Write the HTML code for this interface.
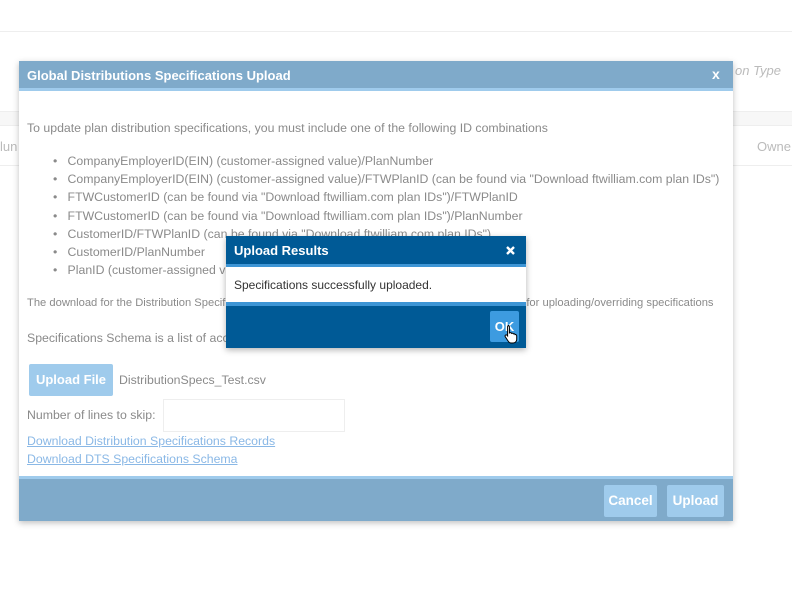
<!DOCTYPE html>
<html><head><meta charset="utf-8"><style>
*{margin:0;padding:0;box-sizing:border-box}
body{width:792px;height:606px;background:#fff;position:relative;overflow:hidden;font-family:"Liberation Sans",sans-serif;color:#8a8a8a}
.a{position:absolute;white-space:nowrap}
.t{font-size:12.3px}
</style></head><body>
<div class="a" style="left:0;top:31px;width:792px;height:1px;background:#eee"></div>
<div class="a" style="left:135px;top:66px;width:180px;height:22px;border:1px solid #f0f0f0"></div>
<div class="a" style="left:735px;top:63px;font-size:13px;font-style:italic;color:#bbb">on Type</div>
<div class="a" style="left:0;top:111px;width:792px;height:1px;background:#eee"></div>
<div class="a" style="left:0;top:112px;width:792px;height:13px;background:#f7f7f7"></div>
<div class="a" style="left:0;top:125px;width:792px;height:1px;background:#eee"></div>
<div class="a" style="left:0;top:165px;width:792px;height:1px;background:#eee"></div>
<div class="a" style="left:0;top:139px;font-size:13px;color:#bbb">lun</div>
<div class="a" style="left:757px;top:139px;font-size:13px;color:#bbb">Owne</div>

<div class="a" style="left:19px;top:61px;width:714px;height:460px;background:#fff;box-shadow:0 2px 6px rgba(0,0,0,.25)">
 <div class="a" style="left:0;top:0;width:714px;height:27px;background:#7faaca"></div>
 <div class="a" style="left:0;top:27px;width:714px;height:3px;background:#9fcbec"></div>
 <div class="a" style="left:8px;top:7px;color:#fff;font-weight:bold;font-size:13px">Global Distributions Specifications Upload</div>
 <div class="a" style="left:693px;top:5px;color:#fff;font-weight:bold;font-size:14px">x</div>
 <div class="a t" style="left:8px;top:60px">To update plan distribution specifications, you must include one of the following ID combinations</div>
 <div class="a t" style="left:34px;top:91px;line-height:18.2px">
 •&nbsp;&nbsp;&nbsp;CompanyEmployerID(EIN) (customer-assigned value)/PlanNumber<br>
 •&nbsp;&nbsp;&nbsp;CompanyEmployerID(EIN) (customer-assigned value)/FTWPlanID (can be found via "Download ftwilliam.com plan IDs")<br>
 •&nbsp;&nbsp;&nbsp;FTWCustomerID (can be found via "Download ftwilliam.com plan IDs")/FTWPlanID<br>
 •&nbsp;&nbsp;&nbsp;FTWCustomerID (can be found via "Download ftwilliam.com plan IDs")/PlanNumber<br>
 •&nbsp;&nbsp;&nbsp;CustomerID/FTWPlanID (can be found via "Download ftwilliam.com plan IDs")<br>
 •&nbsp;&nbsp;&nbsp;CustomerID/PlanNumber<br>
 •&nbsp;&nbsp;&nbsp;PlanID (customer-assigned value)</div>
 <div class="a" style="left:8px;top:236px;font-size:11.2px">The download for the Distribution Specifications Records is a list of all existing specifications - useful for uploading/overriding specifications</div>
 <div class="a t" style="left:8px;top:270px">Specifications Schema is a list of accepted column headers</div>
 <div class="a" style="left:10px;top:303px;width:84px;height:32px;background:#9fcbec;border-radius:2px;color:#fff;font-weight:bold;font-size:13px;line-height:32px;text-align:center">Upload File</div>
 <div class="a t" style="left:100px;top:312px">DistributionSpecs_Test.csv</div>
 <div class="a t" style="left:8px;top:347px">Number of lines to skip:</div>
 <div class="a" style="left:144px;top:338px;width:182px;height:33px;border:1px solid #eee"></div>
 <div class="a t" style="left:8px;top:373px;color:#8ab8e6;text-decoration:underline">Download Distribution Specifications Records</div>
 <div class="a t" style="left:8px;top:391px;color:#8ab8e6;text-decoration:underline">Download DTS Specifications Schema</div>
 <div class="a" style="left:0;top:415px;width:714px;height:3px;background:#9fcbec"></div>
 <div class="a" style="left:0;top:418px;width:714px;height:42px;background:#7faaca"></div>
 <div class="a" style="left:585px;top:424px;width:53px;height:32px;background:#9fcbec;border-radius:2px;color:#fff;font-weight:bold;font-size:13.5px;line-height:32px;text-align:center">Cancel</div>
 <div class="a" style="left:648px;top:424px;width:57px;height:32px;background:#9fcbec;border-radius:2px;color:#fff;font-weight:bold;font-size:13.5px;line-height:32px;text-align:center">Upload</div>
</div>

<div class="a" style="left:226px;top:236px;width:300px;height:112px;background:#005a96;box-shadow:0 2px 6px rgba(0,0,0,.3)">
 <div class="a" style="left:8px;top:7px;color:#fff;font-weight:bold;font-size:13px">Upload Results</div>
 <svg class="a" style="left:280px;top:10px" width="9" height="9" viewBox="0 0 9 9"><path d="M1 1L8 8M8 1L1 8" stroke="#fff" stroke-width="2.4"/></svg>
 <div class="a" style="left:0;top:28px;width:300px;height:3px;background:#3d95d5"></div>
 <div class="a" style="left:0;top:31px;width:300px;height:35px;background:#fff"></div>
 <div class="a" style="left:8px;top:42px;color:#333;font-size:12px">Specifications successfully uploaded.</div>
 <div class="a" style="left:0;top:66px;width:300px;height:4px;background:#3d95d5"></div>
 <div class="a" style="left:264px;top:75px;width:29px;height:31px;background:#3d9be0;border-radius:2px;color:#fff;font-weight:bold;font-size:13px;line-height:31px;text-align:center">OK</div>
 <svg class="a" style="left:278px;top:88px" width="16" height="20" viewBox="0 0 16 20"><path d="M4 1.5c.8 0 1.4.6 1.4 1.4V9l.5-.2c.8-.3 1.5.1 1.7.6.7-.4 1.5-.1 1.8.5.7-.3 1.5 0 1.7.7.9-.2 1.6.4 1.6 1.3v3.5c0 2-1.5 3.6-3.5 3.6H7c-1.2 0-2-.6-2.6-1.5L1.3 12.8c-.5-.7-.3-1.5.4-1.8.6-.3 1.2 0 1.6.5l.3.4V2.9c0-.8.6-1.4 1.4-1.4z" fill="#fff" stroke="#000" stroke-width="1"/></svg>
</div>
</body></html>
